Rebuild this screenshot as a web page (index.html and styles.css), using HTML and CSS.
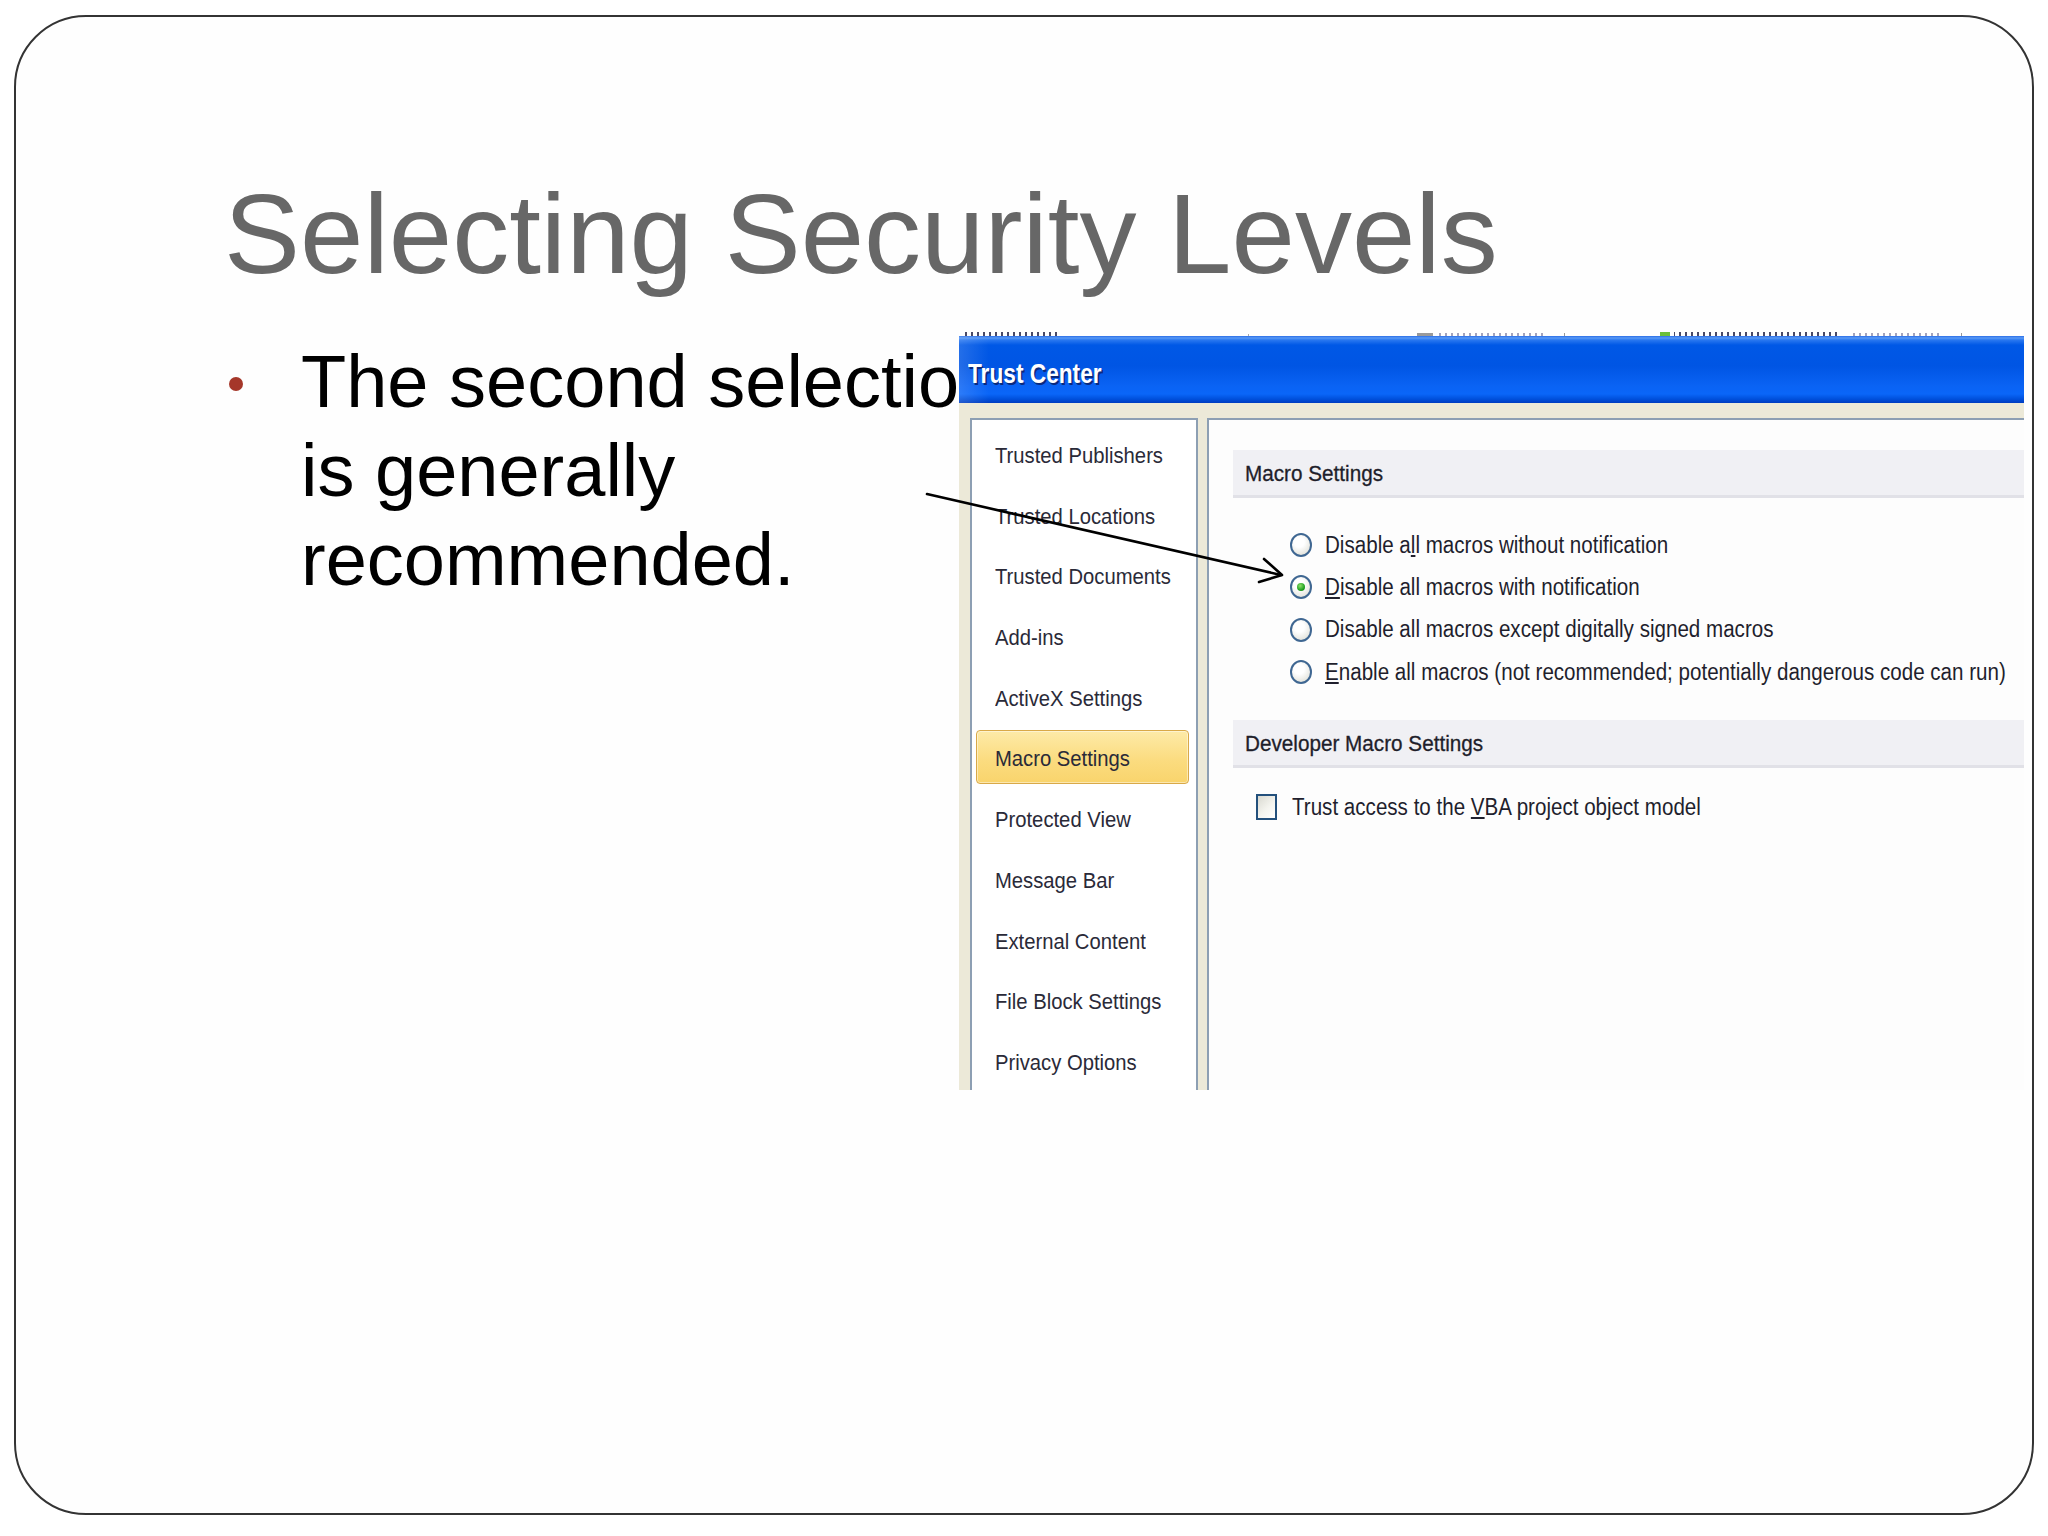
FILE: index.html
```html
<!DOCTYPE html>
<html lang="en">
<head>
<meta charset="utf-8">
<title>Selecting Security Levels</title>
<link rel="stylesheet" href="styles.css">
</head>
<body>
<div class="slide">
  <h1 class="title">Selecting Security Levels</h1>
  <div class="content">
    <div class="points">
      <div class="point">
        <span class="dot"></span>
        <p class="point-text">The second selection is generally recommended.</p>
      </div>
    </div>
    <div class="shot">
      <svg class="strip" width="1065" height="6" viewBox="0 0 1065 6">
        <defs>
          <pattern id="dots" width="6" height="6" patternUnits="userSpaceOnUse">
            <rect x="0" y="2" width="2" height="4" fill="#4a4a66"/>
          </pattern>
          <pattern id="dots-light" width="6" height="6" patternUnits="userSpaceOnUse">
            <rect x="0" y="3" width="2" height="3" fill="#a4a4bc"/>
          </pattern>
        </defs>
        <rect x="2" y="0" width="96" height="6" fill="url(#dots)"/>
        <rect x="289" y="4" width="1" height="2" fill="#aaa"/>
        <rect x="458" y="3" width="16" height="3" fill="#9a9a9a"/>
        <rect x="477" y="0" width="107" height="6" fill="url(#dots-light)"/>
        <rect x="605" y="3" width="1" height="3" fill="#999"/>
        <rect x="701" y="2" width="10" height="4" fill="#6cbf3a"/>
        <rect x="715" y="0" width="167" height="6" fill="url(#dots)"/>
        <rect x="892" y="0" width="89" height="6" fill="url(#dots-light)"/>
        <rect x="1002" y="3" width="1" height="3" fill="#999"/>
      </svg>
      <div class="titlebar"><span class="titlebar-text">Trust Center</span></div>
      <div class="shot-body">
        <ul class="nav">
          <li class="nav-item"><span class="nav-label">Trusted Publishers</span></li>
          <li class="nav-item"><span class="nav-label">Trusted Locations</span></li>
          <li class="nav-item"><span class="nav-label">Trusted Documents</span></li>
          <li class="nav-item"><span class="nav-label">Add-ins</span></li>
          <li class="nav-item"><span class="nav-label">ActiveX Settings</span></li>
          <li class="nav-item is-active"><span class="nav-label">Macro Settings</span></li>
          <li class="nav-item"><span class="nav-label">Protected View</span></li>
          <li class="nav-item"><span class="nav-label">Message Bar</span></li>
          <li class="nav-item"><span class="nav-label">External Content</span></li>
          <li class="nav-item"><span class="nav-label">File Block Settings</span></li>
          <li class="nav-item"><span class="nav-label">Privacy Options</span></li>
        </ul>
        <div class="pane">
          <div class="section-head"><span class="head-label">Macro Settings</span></div>
          <div class="options">
            <div class="option"><span class="radio"></span><span class="label">Disable a<u>l</u>l macros without notification</span></div>
            <div class="option"><span class="radio is-checked"></span><span class="label"><u>D</u>isable all macros with notification</span></div>
            <div class="option"><span class="radio"></span><span class="label">Disable all macros except di<u>g</u>itally signed macros</span></div>
            <div class="option"><span class="radio"></span><span class="label"><u>E</u>nable all macros (not recommended; potentially dangerous code can run)</span></div>
          </div>
          <div class="section-head section-head--dev"><span class="head-label">Developer Macro Settings</span></div>
          <div class="check-row"><span class="checkbox"></span><span class="label">Trust access to the <u>V</u>BA project object model</span></div>
        </div>
      </div>
    </div>
  </div>
  <svg class="arrow" width="2016" height="1496" viewBox="0 0 2016 1496">
    <line x1="911" y1="477" x2="1265" y2="558" stroke="#000" stroke-width="2.6" stroke-linecap="round"/>
    <polyline points="1243,565 1266,558 1248,542" fill="none" stroke="#000" stroke-width="2.6" stroke-linecap="round" stroke-linejoin="round"/>
  </svg>
</div>
</body>
</html>
```

FILE: styles.css
```css
* {
  box-sizing: border-box;
}

html,
body {
  margin: 0;
  padding: 0;
  background: #ffffff;
}

body {
  width: 2048px;
  height: 1536px;
  padding: 15px 0 0 14px;
  overflow: hidden;
  font-family: "Liberation Sans", Arial, sans-serif;
}

.slide {
  position: relative;
  width: 2020px;
  height: 1500px;
  border: 2px solid #333333;
  border-radius: 72px;
  background: #fefefe;
}

.title {
  margin: 0;
  padding: 160px 0 0 208px;
  font-size: 114px;
  line-height: 114px;
  font-weight: normal;
  color: #676767;
  white-space: nowrap;
}

.content {
  display: flex;
  margin-top: 39px;
}

.points {
  flex: none;
  width: 943px;
  overflow: hidden;
  padding: 7px 0 0 213px;
}

.point {
  display: flex;
}

.dot {
  flex: none;
  width: 14px;
  height: 14px;
  margin-top: 40px;
  border-radius: 50%;
  background: #a5372a;
}

.point-text {
  flex: none;
  width: 760px;
  margin: 0 0 0 58px;
  font-size: 74px;
  line-height: 89px;
  color: #000000;
}

/* ---------- screenshot of the Trust Center dialog ---------- */

.shot {
  flex: none;
  width: 1065px;
  height: 760px;
  display: flex;
  flex-direction: column;
  overflow: hidden;
  background: #ece9d8;
}

.strip {
  display: block;
  flex: none;
  background: #ffffff;
}

.titlebar {
  flex: none;
  height: 67px;
  padding: 8px 0 0 9px;
  font-weight: bold;
  font-size: 28px;
  line-height: 59px;
  color: #ffffff;
  text-shadow: 2px 2px 0 #0b2a7e;
  white-space: nowrap;
  background:
    linear-gradient(to right, rgba(255, 255, 255, 0.14), rgba(255, 255, 255, 0) 30px),
    linear-gradient(#2a6ee8 0, #5a9af5 2px, #2a78f0 4px, #0058e6 9px, #0055e4 30px, #0a63f4 50px, #0a66f8 58px, #0050dc 63px, #003cc0 67px);
}

.titlebar-text {
  display: inline-block;
  transform: scaleX(0.81);
  transform-origin: 0 50%;
}

.shot-body {
  flex: 1;
  min-height: 0;
  display: flex;
  gap: 9px;
  padding: 15px 0 0 11px;
  background: #ece9d8;
}

.nav {
  flex: none;
  width: 228px;
  margin: 0;
  padding: 7px 0 0 4px;
  list-style: none;
  background: #ffffff;
  border: 2px solid #8d9fb3;
  border-bottom: none;
  overflow: hidden;
}

.nav-item {
  width: 213px;
  height: 54px;
  margin-bottom: 6.7px;
  padding: 2px 0 0 18px;
  border: 1px solid transparent;
  border-radius: 4px;
  font-size: 22px;
  line-height: 52px;
  color: #2a2a38;
  white-space: nowrap;
}

.nav-label {
  display: inline-block;
  transform: scaleX(0.92);
  transform-origin: 0 50%;
}

.nav-item.is-active {
  border-color: #d9a948;
  background: linear-gradient(#fdeaa8, #fbdc80 55%, #f9d46c);
  box-shadow: inset 0 0 0 1px rgba(255, 255, 255, 0.45);
}

.pane {
  flex: 1;
  min-width: 0;
  overflow: hidden;
  padding: 30px 0 0 24px;
  background: #fdfdfd;
  border-top: 2px solid #8d9fb3;
  border-left: 2px solid #8d9fb3;
}

.section-head {
  height: 48px;
  padding: 1px 0 0 12px;
  background: #f0f0f4;
  border-bottom: 3px solid #e1e1e7;
  font-size: 22.5px;
  line-height: 45px;
  color: #1e1e2a;
  white-space: nowrap;
}

.head-label {
  display: inline-block;
  transform: scaleX(0.92);
  transform-origin: 0 50%;
  -webkit-text-stroke: 0.3px #1e1e2a;
}

.section-head--dev {
  margin-top: 27px;
}

.options {
  padding: 26px 0 0 57px;
}

.option {
  display: flex;
  align-items: center;
  gap: 13px;
  height: 42.3px;
}

.label {
  display: inline-block;
  font-size: 23px;
  color: #1f1f2d;
  white-space: nowrap;
  transform: scaleX(0.895);
  transform-origin: 0 50%;
}

.label u {
  text-decoration-thickness: 2px;
  text-underline-offset: 2px;
}

.radio {
  position: relative;
  flex: none;
  width: 22px;
  height: 24px;
  border: 2px solid #3f6792;
  border-radius: 50%;
  background: radial-gradient(circle at 40% 35%, #ffffff 30%, #e6e6df 75%, #cfcfc6 100%);
}

.radio.is-checked::after {
  content: "";
  position: absolute;
  left: 5px;
  top: 6px;
  width: 8px;
  height: 8px;
  border-radius: 50%;
  background: radial-gradient(circle at 40% 35%, #8fe06a, #21a121 60%, #137a13);
}

.check-row {
  display: flex;
  align-items: center;
  gap: 15px;
  height: 42px;
  margin-top: 18px;
  padding-left: 23px;
}

.checkbox {
  flex: none;
  width: 21px;
  height: 26px;
  border: 2px solid #23507c;
  background: linear-gradient(135deg, #d9d9d0, #f4f4ef 55%, #ffffff);
}

.arrow {
  position: absolute;
  left: 0;
  top: 0;
  pointer-events: none;
  overflow: visible;
}
```
